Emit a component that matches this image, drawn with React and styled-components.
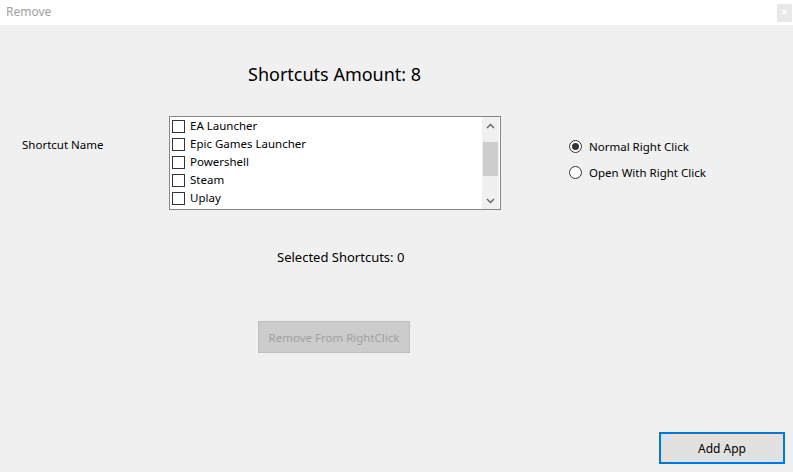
import React, { useState } from "react";
import styled, { createGlobalStyle } from "styled-components";

const GlobalStyle = createGlobalStyle`
  html, body {
    margin: 0;
    padding: 0;
    background: #f0f0f0;
  }
  body {
    font-family: "Segoe UI", "Noto Sans", "Open Sans", sans-serif;
    font-size: 11.5px;
    color: #000;
  }
`;

const shortcuts = ["EA Launcher", "Epic Games Launcher", "Powershell", "Steam", "Uplay"];

function App() {
  const [mode, setMode] = useState("normal");

  return (
    <>
      <GlobalStyle />
      <Window>
        <TitleBar>
          <span className="title">Remove</span>
          <CloseButton>✕</CloseButton>
        </TitleBar>

        <Body>
          <Heading>Shortcuts Amount: 8</Heading>

          <MiddleRow>
            <FieldLabel>Shortcut Name</FieldLabel>

            <ListBox>
              <ListItems>
                {shortcuts.map((name) => (
                  <ListItem key={name}>
                    <CheckBox />
                    {name}
                  </ListItem>
                ))}
              </ListItems>
              <ScrollBar>
                <ScrollArrow>
                  <svg width="9" height="6" viewBox="0 0 9 6">
                    <path d="M1 5 L4.5 1.5 L8 5" fill="none" stroke="#606060" strokeWidth="1.3" />
                  </svg>
                </ScrollArrow>
                <ScrollTrack>
                  <ScrollThumb />
                </ScrollTrack>
                <ScrollArrow>
                  <svg width="9" height="6" viewBox="0 0 9 6">
                    <path d="M1 1 L4.5 4.5 L8 1" fill="none" stroke="#606060" strokeWidth="1.3" />
                  </svg>
                </ScrollArrow>
              </ScrollBar>
            </ListBox>

            <RadioGroup>
              <Radio onClick={() => setMode("normal")}>
                <RadioDot $checked={mode === "normal"} />
                Normal Right Click
              </Radio>
              <Radio onClick={() => setMode("open")}>
                <RadioDot $checked={mode === "open"} />
                Open With Right Click
              </Radio>
            </RadioGroup>
          </MiddleRow>

          <Selected>Selected Shortcuts: 0</Selected>

          <RemoveButton disabled>Remove From RightClick</RemoveButton>

          <Footer>
            <AddButton>Add App</AddButton>
          </Footer>
        </Body>
      </Window>
    </>
  );
}

export default App;

const Window = styled.div`
  width: 793px;
  height: 472px;
  display: flex;
  flex-direction: column;
  background: #f0f0f0;
  overflow: hidden;
`;

const TitleBar = styled.div`
  height: 25px;
  background: #ffffff;
  display: flex;
  align-items: flex-start;
  justify-content: space-between;

  .title {
    color: #a0a0a0;
    font-size: 12px;
    padding: 3px 0 0 6px;
  }
`;

const CloseButton = styled.button`
  width: 15px;
  height: 18px;
  margin: 4px 1px 0 0;
  padding: 0;
  border: none;
  background: #e8e8e8;
  color: #ffffff;
  font-size: 8px;
  font-weight: 700;
  line-height: 18px;
`;

const Body = styled.div`
  flex: 1;
  display: flex;
  flex-direction: column;
`;

const Heading = styled.div`
  margin: 37px 0 0 248px;
  font-size: 18px;
  line-height: 24px;
`;

const MiddleRow = styled.div`
  display: flex;
  align-items: flex-start;
  margin-top: 30px;
`;

const FieldLabel = styled.div`
  width: 147px;
  padding: 21px 0 0 22px;
  line-height: 16px;
`;

const ListBox = styled.div`
  width: 330px;
  height: 92px;
  border: 1px solid #828790;
  background: #ffffff;
  display: flex;
`;

const ListItems = styled.div`
  flex: 1;
  padding: 0 0 0 2px;
`;

const ListItem = styled.div`
  height: 18px;
  display: flex;
  align-items: center;
  line-height: 18px;
`;

const CheckBox = styled.span`
  width: 11px;
  height: 11px;
  border: 1px solid #333333;
  background: #ffffff;
  margin-right: 5px;
`;

const ScrollBar = styled.div`
  width: 17px;
  display: flex;
  flex-direction: column;
  background: #f0f0f0;
  margin: 0 1px 0 0;
`;

const ScrollArrow = styled.span`
  height: 17px;
  display: flex;
  align-items: center;
  justify-content: center;
`;

const ScrollTrack = styled.span`
  flex: 1;
  display: flex;
  flex-direction: column;
  padding-top: 8px;
`;

const ScrollThumb = styled.span`
  height: 34px;
  margin: 0 1px;
  background: #cdcdcd;
`;

const RadioGroup = styled.div`
  display: flex;
  flex-direction: column;
  gap: 10px;
  margin: 22px 0 0 68px;
`;

const Radio = styled.label`
  display: flex;
  align-items: center;
  height: 16px;
  cursor: pointer;
`;

const RadioDot = styled.span`
  width: 11px;
  height: 11px;
  border: 1px solid #333333;
  border-radius: 50%;
  background: #ffffff;
  margin-right: 7px;
  display: flex;
  align-items: center;
  justify-content: center;

  &::after {
    content: "";
    width: 7px;
    height: 7px;
    border-radius: 50%;
    background: ${(p) => (p.$checked ? "#333333" : "transparent")};
  }
`;

const Selected = styled.div`
  margin: 38px 0 0 277px;
  font-size: 13px;
  line-height: 18px;
`;

const RemoveButton = styled.button`
  align-self: flex-start;
  width: 152px;
  height: 32px;
  margin: 55px 0 0 258px;
  border: 1px solid #bfbfbf;
  background: #cccccc;
  color: #a0a0a0;
  font-family: inherit;
  font-size: 11.5px;
  padding: 0;
`;

const Footer = styled.div`
  flex: 1;
  display: flex;
  justify-content: flex-end;
  align-items: flex-end;
  padding: 0 8px 8px 0;
`;

const AddButton = styled.button`
  width: 126px;
  height: 32px;
  border: 2px solid #0078d7;
  background: #e1e1e1;
  color: #000;
  font-family: inherit;
  font-size: 12px;
  padding: 0;
`;
